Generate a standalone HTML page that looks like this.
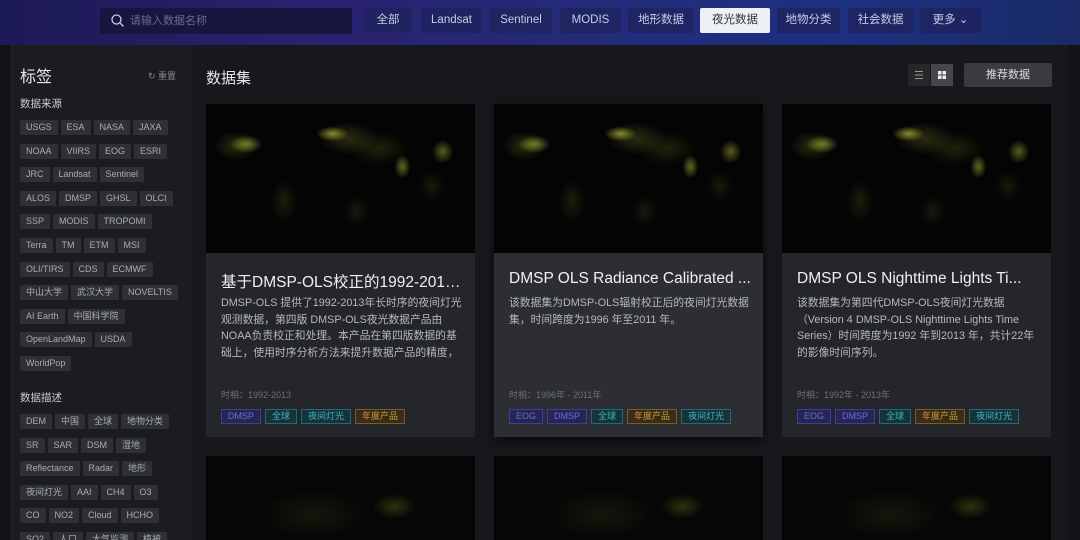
<!DOCTYPE html>
<html><head><meta charset="utf-8"><style>
*{margin:0;padding:0;box-sizing:border-box}
html,body{width:1080px;height:540px;overflow:hidden}
body{background:#17181b;font-family:"Liberation Sans","Noto Sans CJK SC",sans-serif;position:relative;color:#ddd}
.hdr{position:absolute;left:0;top:0;width:1080px;height:45px;background:linear-gradient(90deg,#1c1a55 0%,#2a2270 30%,#222c7c 60%,#1d3080 80%,#1a2a66 100%)}
.search{position:absolute;left:100px;top:8px;width:252px;height:26px;background:#161640;border-radius:2px;color:#6a6a90;font-size:11px;line-height:26px;padding-left:30px}
.search svg{position:absolute;left:11px;top:6px}
.nav{position:absolute;top:8px;height:25px;background:rgba(30,35,95,.85);color:#c8cbe0;font-size:11.5px;line-height:25px;text-align:center;border-radius:2px}
.nav.on{background:#eef0f8;color:#333}
.lstrip{position:absolute;left:0;top:45px;width:10px;height:495px;background:#111214}
.rstrip{position:absolute;left:1068px;top:45px;width:12px;height:495px;background:#121316}
.side{position:absolute;left:10px;top:45px;width:183px;height:495px;background:#1b1c20;overflow:hidden}
.side h2{position:absolute;left:10px;top:18px;font-size:16px;font-weight:normal;color:#e8e8e8}
.reset{position:absolute;left:138px;top:24px;font-size:9px;color:#888}
.sec{position:absolute;left:10px;font-size:10.5px;color:#ccc}
.tags{position:absolute;left:10px;width:175px}
.r{height:23.6px;white-space:nowrap}
.tg{display:inline-block;height:15px;line-height:15px;font-size:9px;padding:0 6px;background:#2e3036;color:#a9acb3;margin-right:3px;border-radius:1px;vertical-align:top}
.title{position:absolute;left:206px;top:67px;font-size:15px;color:#e8e8e8}
.vbtn{position:absolute;top:64px;width:22px;height:22px;background:#262729}
.rec{position:absolute;left:964px;top:63px;width:88px;height:24px;background:#3a3b3f;color:#ddd;font-size:11px;line-height:24px;text-align:center;border-radius:2px}
.card{position:absolute;top:104px;width:269px;height:333px;background:#24262b;overflow:hidden}
.card.hov{background:#2c2e34;box-shadow:0 4px 10px rgba(0,0,0,.6)}
.map{position:absolute;left:0;top:0;width:269px;height:149px;background:
radial-gradient(ellipse 6% 6% at 15% 27%,rgba(200,210,60,.55),transparent),
radial-gradient(ellipse 8% 10% at 11% 28%,rgba(130,140,40,.3),transparent),
radial-gradient(ellipse 6% 5% at 47% 20%,rgba(210,220,70,.6),transparent),
radial-gradient(ellipse 11% 11% at 53% 23%,rgba(130,140,40,.3),transparent),
radial-gradient(ellipse 3% 8% at 73% 42%,rgba(190,200,60,.5),transparent),
radial-gradient(ellipse 4% 8% at 88% 32%,rgba(190,200,60,.45),transparent),
radial-gradient(ellipse 11% 11% at 64% 30%,rgba(110,120,40,.25),transparent),
radial-gradient(ellipse 5% 14% at 29% 65%,rgba(100,110,40,.25),transparent),
radial-gradient(ellipse 5% 10% at 56% 72%,rgba(100,110,40,.2),transparent),
radial-gradient(ellipse 5% 10% at 84% 55%,rgba(100,110,40,.2),transparent),#040404}
.map2{position:absolute;left:0;top:0;width:269px;height:84px;background:
radial-gradient(ellipse 8% 15% at 70% 60%,rgba(140,150,40,.3),transparent),
radial-gradient(ellipse 20% 30% at 40% 70%,rgba(80,90,30,.2),transparent),#060606}
.card h3{position:absolute;left:15px;top:166px;font-size:15.5px;font-weight:normal;color:#f0f0f0;white-space:nowrap;width:242px;overflow:hidden;text-overflow:ellipsis}
.card p{position:absolute;left:15px;top:191px;width:245px;font-size:10.8px;line-height:16.5px;color:#b5b8bf;max-height:66px;overflow:hidden}
.card .t{position:absolute;left:15px;top:284px;font-size:9px;color:#6c6f76}
.card .ct{position:absolute;left:15px;top:302px;white-space:nowrap}
.c{display:inline-block;height:15px;line-height:13px;font-size:9px;padding:0 6px;border:1px solid;margin-right:4px}
.p{color:#6a6ae8;border-color:#3e3e9a;background:#272552}
.b{color:#3fb2c8;border-color:#1f6a78;background:#163438}
.o{color:#d09a3a;border-color:#7a5a26;background:#3a2d18}
</style></head><body>
<div class="hdr">
<div class="search"><svg width="13" height="13" viewBox="0 0 13 13"><circle cx="5.5" cy="5.5" r="4.5" fill="none" stroke="#ccd" stroke-width="1.3"/><line x1="9" y1="9" x2="12.5" y2="12.5" stroke="#ccd" stroke-width="1.3"/></svg>请输入数据名称</div>
<div class="nav" style="left:364px;width:48px">全部</div>
<div class="nav" style="left:421px;width:61px">Landsat</div>
<div class="nav" style="left:490px;width:62px">Sentinel</div>
<div class="nav" style="left:560px;width:61px">MODIS</div>
<div class="nav" style="left:628px;width:66px">地形数据</div>
<div class="nav on" style="left:700px;width:70px">夜光数据</div>
<div class="nav" style="left:777px;width:63px">地物分类</div>
<div class="nav" style="left:848px;width:65px">社会数据</div>
<div class="nav" style="left:920px;width:61px">更多 ⌄</div>
</div>
<div class="lstrip"></div><div class="rstrip"></div>
<div class="side">
<h2>标签</h2><div class="reset">↻ 重置</div>
<div class="sec" style="top:51px">数据来源</div>
<div class="tags" style="top:75px">
<div class="r"><span class="tg">USGS</span><span class="tg">ESA</span><span class="tg">NASA</span><span class="tg">JAXA</span></div>
<div class="r"><span class="tg">NOAA</span><span class="tg">VIIRS</span><span class="tg">EOG</span><span class="tg">ESRI</span></div>
<div class="r"><span class="tg">JRC</span><span class="tg">Landsat</span><span class="tg">Sentinel</span></div>
<div class="r"><span class="tg">ALOS</span><span class="tg">DMSP</span><span class="tg">GHSL</span><span class="tg">OLCI</span></div>
<div class="r"><span class="tg">SSP</span><span class="tg">MODIS</span><span class="tg">TROPOMI</span></div>
<div class="r"><span class="tg">Terra</span><span class="tg">TM</span><span class="tg">ETM</span><span class="tg">MSI</span></div>
<div class="r"><span class="tg">OLI/TIRS</span><span class="tg">CDS</span><span class="tg">ECMWF</span></div>
<div class="r"><span class="tg">中山大学</span><span class="tg">武汉大学</span><span class="tg">NOVELTIS</span></div>
<div class="r"><span class="tg">AI Earth</span><span class="tg">中国科学院</span></div>
<div class="r"><span class="tg">OpenLandMap</span><span class="tg">USDA</span></div>
<div class="r"><span class="tg">WorldPop</span></div>
</div>
<div class="sec" style="top:345px">数据描述</div>
<div class="tags" style="top:369px">
<div class="r"><span class="tg">DEM</span><span class="tg">中国</span><span class="tg">全球</span><span class="tg">地物分类</span></div>
<div class="r"><span class="tg">SR</span><span class="tg">SAR</span><span class="tg">DSM</span><span class="tg">湿地</span></div>
<div class="r"><span class="tg">Reflectance</span><span class="tg">Radar</span><span class="tg">地形</span></div>
<div class="r"><span class="tg">夜间灯光</span><span class="tg">AAI</span><span class="tg">CH4</span><span class="tg">O3</span></div>
<div class="r"><span class="tg">CO</span><span class="tg">NO2</span><span class="tg">Cloud</span><span class="tg">HCHO</span></div>
<div class="r"><span class="tg">SO2</span><span class="tg">人口</span><span class="tg">大气监测</span><span class="tg">植被</span></div>
</div>
</div>
<div class="title">数据集</div>
<div class="vbtn" style="left:908px"><svg width="22" height="22"><g stroke="#999" stroke-width="1"><line x1="7" y1="7.5" x2="15" y2="7.5"/><line x1="7" y1="11" x2="15" y2="11"/><line x1="7" y1="14.5" x2="15" y2="14.5"/></g></svg></div>
<div class="vbtn" style="left:931px;background:#45464a"><svg width="22" height="22"><g fill="#eee"><rect x="7" y="7" width="3.5" height="3.5"/><rect x="11.5" y="7" width="3.5" height="3.5"/><rect x="7" y="11.5" width="3.5" height="3.5"/><rect x="11.5" y="11.5" width="3.5" height="3.5"/></g></svg></div>
<div class="rec">推荐数据</div>

<div class="card" style="left:206px"><div class="map"></div>
<h3>基于DMSP-OLS校正的1992-2013...</h3>
<p>DMSP-OLS 提供了1992-2013年长时序的夜间灯光观测数据，第四版 DMSP-OLS夜光数据产品由NOAA负责校正和处理。本产品在第四版数据的基础上，使用时序分析方法来提升数据产品的精度，以...</p>
<div class="t">时相：1992-2013</div>
<div class="ct"><span class="c p">DMSP</span><span class="c b">全球</span><span class="c b">夜间灯光</span><span class="c o">年度产品</span></div></div>

<div class="card hov" style="left:494px"><div class="map"></div>
<h3>DMSP OLS Radiance Calibrated ...</h3>
<p>该数据集为DMSP-OLS辐射校正后的夜间灯光数据集，时间跨度为1996 年至2011 年。</p>
<div class="t">时相：1996年 - 2011年</div>
<div class="ct"><span class="c p">EOG</span><span class="c p">DMSP</span><span class="c b">全球</span><span class="c o">年度产品</span><span class="c b">夜间灯光</span></div></div>

<div class="card" style="left:782px"><div class="map"></div>
<h3>DMSP OLS Nighttime Lights Ti...</h3>
<p>该数据集为第四代DMSP-OLS夜间灯光数据（Version 4 DMSP-OLS Nighttime Lights Time Series）时间跨度为1992 年到2013 年，共计22年的影像时间序列。</p>
<div class="t">时相：1992年 - 2013年</div>
<div class="ct"><span class="c p">EOG</span><span class="c p">DMSP</span><span class="c b">全球</span><span class="c o">年度产品</span><span class="c b">夜间灯光</span></div></div>

<div class="card" style="left:206px;top:456px;height:84px"><div class="map2"></div></div>
<div class="card" style="left:494px;top:456px;height:84px"><div class="map2"></div></div>
<div class="card" style="left:782px;top:456px;height:84px"><div class="map2"></div></div>
</body></html>
